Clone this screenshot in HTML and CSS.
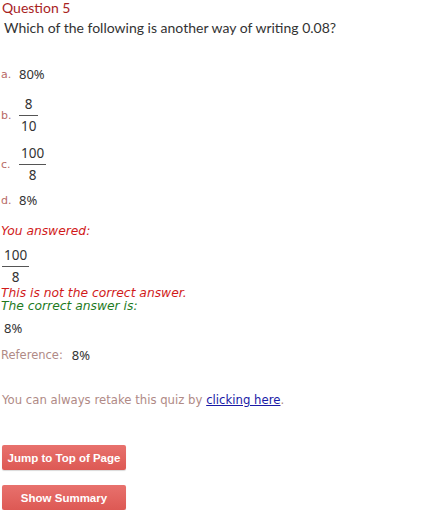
FILE: index.html
```html
<!DOCTYPE html>
<html lang="en">
  <head>
    <meta charset="UTF-8" />
    <meta name="viewport" content="width=device-width, initial-scale=1.0" />
    <title>Question 5</title>
    <link rel="stylesheet" href="styles.css">
  </head>

  <body>
    <div class="question-title">Question 5</div>
    <div class="question-text">Which of the following is another way of writing 0.08?</div>

    <ul class="options">
      <li class="option option-a">
        <span class="option-label">a.</span>
        <span class="value">80%</span>
      </li>
      <li class="option option-b">
        <span class="option-label">b.</span>
        <span class="frac">
          <span class="num">8</span>
          <span class="den">10</span>
        </span>
      </li>
      <li class="option option-c">
        <span class="option-label">c.</span>
        <span class="frac">
          <span class="num">100</span>
          <span class="den">8</span>
        </span>
      </li>
      <li class="option option-d">
        <span class="option-label">d.</span>
        <span class="value">8%</span>
      </li>
    </ul>

    <div class="answered">You answered:</div>
    <div class="answer-frac">
      <span class="frac">
        <span class="num">100</span>
        <span class="den">8</span>
      </span>
    </div>
    <div class="wrong">This is not the correct answer.</div>
    <div class="correct">The correct answer is:</div>
    <div class="correct-value">8%</div>

    <div class="reference">
      <span class="reference-label">Reference:</span>
      <span class="value">8%</span>
    </div>

    <p class="retake">You can always retake this quiz by <a href="#">clicking here</a>.</p>

    <div class="actions">
      <button type="button" class="btn">Jump to Top of Page</button>
      <button type="button" class="btn">Show Summary</button>
    </div>
  </body>
</html>
```

FILE: styles.css
```css
body {
  margin: 0;
  padding: 0;
  background-color: #ffffff;
  font-family: "Noto Sans", "Open Sans", sans-serif;
  color: #333;
}

.question-title {
  font-family: "Lato", sans-serif;
  font-size: 14px;
  line-height: 16px;
  color: #a8221e;
  padding-left: 2px;
}

.question-text {
  font-family: "Lato", sans-serif;
  font-size: 14px;
  line-height: 20px;
  color: #333;
  padding-left: 4px;
  margin-top: 2px;
}

.options {
  list-style: none;
  margin: 27px 0 0;
  padding: 0;
}

.option {
  display: flex;
  align-items: center;
  padding-left: 1px;
}

.option-label {
  font-family: "DejaVu Sans", sans-serif;
  font-size: 11px;
  color: #b86a66;
  width: 18px;
}

.value {
  font-size: 13px;
  color: #333;
}

.option-a,
.option-d {
  height: 18px;
}

.option-b {
  margin-top: 12px;
}

.option-c {
  margin-top: 9px;
}

.option-d {
  margin-top: 7px;
}

/* stacked fraction */
.frac {
  display: inline-flex;
  flex-direction: column;
  align-items: stretch;
  text-align: center;
  font-size: 13.5px;
  color: #333;
}

.num {
  padding: 0 2px 2px;
  border-bottom: 1px solid #555;
  line-height: 18px;
}

.den {
  padding: 1px 2px 0;
  line-height: 18px;
}

.answered,
.wrong,
.correct {
  font-family: "DejaVu Sans", sans-serif;
  font-style: italic;
  font-size: 12.3px;
  line-height: 13px;
  padding-left: 1px;
}

.answered {
  margin-top: 16px;
  color: #d11a1a;
}

.answer-frac {
  padding-left: 2px;
  margin-top: 5px;
}

.wrong {
  color: #d11a1a;
  margin-top: 1px;
}

.correct {
  color: #1e7a1e;
}

.correct-value {
  font-size: 13px;
  line-height: 18px;
  padding-left: 4px;
  margin-top: 6px;
}

.reference {
  display: flex;
  align-items: center;
  gap: 9px;
  height: 18px;
  margin-top: 9px;
  padding-left: 1px;
}

.reference-label {
  font-family: "DejaVu Sans", sans-serif;
  font-size: 11.5px;
  color: #b08a86;
}

.retake {
  font-family: "DejaVu Sans", sans-serif;
  font-size: 11.7px;
  line-height: 13px;
  color: #b08a86;
  margin: 30px 0 0;
  padding-left: 2px;
}

.retake a {
  color: #1a1aa6;
}

.actions {
  display: flex;
  flex-direction: column;
  align-items: flex-start;
  gap: 15px;
  margin-top: 38px;
  padding-left: 2px;
}

.btn {
  width: 124px;
  height: 25px;
  border: none;
  border-radius: 2px;
  background: linear-gradient(#e8716d, #dd5954);
  color: #fff;
  font-family: "Liberation Sans", Arial, sans-serif;
  font-weight: bold;
  font-size: 11.5px;
  padding: 0;
  box-shadow: 0 1px 1px rgba(0, 0, 0, 0.15);
}
```
